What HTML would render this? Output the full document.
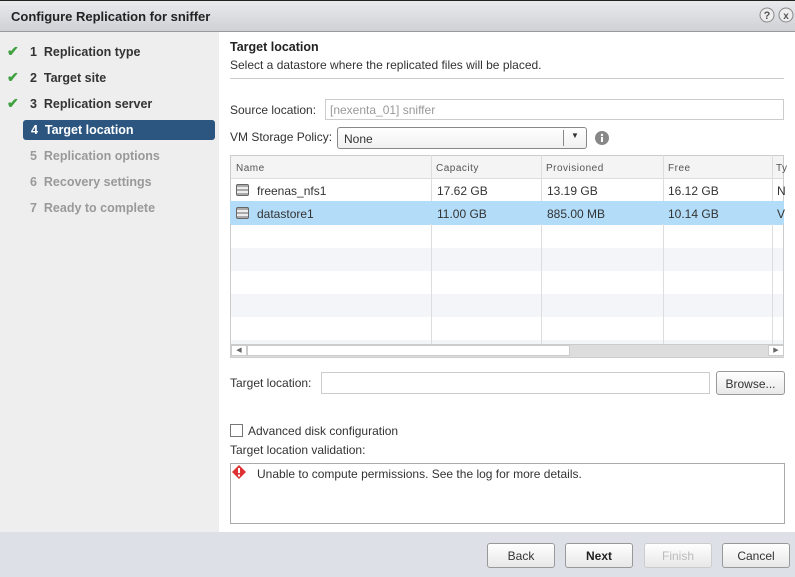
<!DOCTYPE html>
<html><head><style>
*{box-sizing:border-box;margin:0;padding:0}
body{width:795px;height:577px;overflow:hidden;font-family:"Liberation Sans",sans-serif;font-size:12px;color:#333;position:relative;background:#fff}
.a{position:absolute}
.title{left:0;top:0;width:795px;height:32px;background:linear-gradient(#e9eaec,#cfd1d5);border-top:1px solid #222;border-bottom:1px solid #999;font-weight:bold;font-size:13px;padding:8px 0 0 11px;color:#222}
.left{left:0;top:32px;width:219px;height:500px;background:#eeeeee}
.step{position:absolute;left:30px;font-weight:bold;font-size:12.5px;color:#333}
.step.dis{color:#999}
.chk{position:absolute;left:7px;color:#3ea03e;font-weight:bold;font-size:14px}
.sel{left:23px;top:120px;width:192px;height:20px;background:#2c5680;border-radius:3px;color:#fff;font-weight:bold;font-size:12.5px;padding:3px 0 0 8px}
.footer{left:0;top:532px;width:795px;height:45px;background:#dde1e7}
.btn{position:absolute;top:543px;height:25px;border:1px solid #999;border-radius:3px;background:linear-gradient(#fff,#e8e8e8);text-align:center;padding-top:5px;font-size:12px;color:#333}
.inp{position:absolute;border:1px solid #ccc;background:#fff}
.cell{position:absolute;font-size:12px;color:#333}
.hd{font-size:10px;color:#555;letter-spacing:.5px}
.vl{position:absolute;top:155px;width:1px;height:189px;background:#ddd}
.db{position:absolute;width:13px;height:12px;border:1px solid #666;border-radius:2px;background:repeating-linear-gradient(#aaa 0 2px,#eee 2px 4px)}
</style></head><body>
<div class="a title">Configure Replication for sniffer</div>
<svg class="a" style="left:759px;top:6px" width="36" height="20"><circle cx="8" cy="9" r="7" fill="#eee" stroke="#888"/><text x="8" y="13" font-size="11" font-weight="bold" text-anchor="middle" fill="#555" font-family="Liberation Sans">?</text><circle cx="27" cy="9" r="7" fill="#eee" stroke="#888"/><text x="27" y="13" font-size="10" font-weight="bold" text-anchor="middle" fill="#555" font-family="Liberation Sans">x</text></svg>
<div class="a left"></div>
<div class="chk" style="top:43px">✔</div><div class="step" style="top:45px">1&nbsp; Replication type</div>
<div class="chk" style="top:69px">✔</div><div class="step" style="top:71px">2&nbsp; Target site</div>
<div class="chk" style="top:95px">✔</div><div class="step" style="top:97px">3&nbsp; Replication server</div>
<div class="a sel">4&nbsp; Target location</div>
<div class="step dis" style="top:149px">5&nbsp; Replication options</div>
<div class="step dis" style="top:175px">6&nbsp; Recovery settings</div>
<div class="step dis" style="top:201px">7&nbsp; Ready to complete</div>

<div class="a" style="left:230px;top:40px;font-weight:bold;font-size:12.5px;color:#222">Target location</div>
<div class="a" style="left:230px;top:58px;color:#333">Select a datastore where the replicated files will be placed.</div>
<div class="a" style="left:230px;top:78px;width:554px;height:1px;background:#ccc"></div>
<div class="a" style="left:230px;top:103px">Source location:</div>
<div class="inp" style="left:325px;top:99px;width:459px;height:21px;padding:3px 4px;color:#999">[nexenta_01] sniffer</div>
<div class="a" style="left:230px;top:130px">VM Storage Policy:</div>
<div class="inp" style="left:337px;top:127px;width:250px;height:22px;border:1px solid #888;border-radius:3px;background:linear-gradient(#fff,#f0f0f0);padding:4px 6px;color:#333">None</div>
<div class="a" style="left:563px;top:130px;width:1px;height:16px;background:#888"></div>
<div class="a" style="left:571px;top:131px;font-size:8px">▼</div>
<svg class="a" style="left:595px;top:131px" width="14" height="14"><circle cx="7" cy="7" r="7" fill="#888"/><rect x="6" y="6" width="2" height="5" fill="#fff"/><circle cx="7" cy="4" r="1.2" fill="#fff"/></svg>

<div class="a" style="left:230px;top:155px;width:554px;height:203px;border:1px solid #ccc;background:#fff;overflow:hidden">
 <div class="a" style="left:0;top:0;width:554px;height:23px;background:#f4f4f4;border-bottom:1px solid #ddd"></div>
 <div class="a" style="left:0;top:46px;width:554px;height:23px;background:#b3dcf8"></div>
 <div class="a" style="left:0;top:92px;width:554px;height:23px;background:#f3f5f9"></div>
 <div class="a" style="left:0;top:138px;width:554px;height:23px;background:#f3f5f9"></div>
 <div class="a" style="left:0;top:184px;width:554px;height:4px;background:#f3f5f9"></div>
</div>
<div class="vl" style="left:431px"></div><div class="vl" style="left:541px"></div><div class="vl" style="left:663px"></div><div class="vl" style="left:772px"></div>
<div class="a" style="left:230px;top:201px;width:554px;height:23px;background:#b3dcf8"></div>
<div class="cell hd" style="left:236px;top:163px">Name</div>
<div class="cell hd" style="left:436px;top:163px">Capacity</div>
<div class="cell hd" style="left:546px;top:163px">Provisioned</div>
<div class="cell hd" style="left:668px;top:163px">Free</div>
<div class="cell hd" style="left:776px;top:163px">Ty</div>
<div class="db" style="left:236px;top:184px"></div>
<div class="cell" style="left:257px;top:184px">freenas_nfs1</div>
<div class="cell" style="left:437px;top:184px">17.62 GB</div>
<div class="cell" style="left:547px;top:184px">13.19 GB</div>
<div class="cell" style="left:668px;top:184px">16.12 GB</div>
<div class="cell" style="left:777px;top:184px">N</div>
<div class="db" style="left:236px;top:207px"></div>
<div class="cell" style="left:257px;top:207px">datastore1</div>
<div class="cell" style="left:437px;top:207px">11.00 GB</div>
<div class="cell" style="left:547px;top:207px">885.00 MB</div>
<div class="cell" style="left:668px;top:207px">10.14 GB</div>
<div class="cell" style="left:777px;top:207px">V</div>
<div class="a" style="left:231px;top:344px;width:553px;height:13px;background:#ddd;border-top:1px solid #ccc"></div>
<div class="a" style="left:247px;top:345px;width:323px;height:11px;background:#fff;border:1px solid #ccc"></div>
<div class="a" style="left:231px;top:345px;width:16px;height:11px;background:#fff;border:1px solid #ccc;font-size:7px;color:#666;text-align:center">◀</div>
<div class="a" style="left:768px;top:345px;width:16px;height:11px;background:#fff;border:1px solid #ccc;font-size:7px;color:#666;text-align:center">▶</div>

<div class="a" style="left:230px;top:376px">Target location:</div>
<div class="inp" style="left:321px;top:372px;width:389px;height:22px"></div>
<div class="btn" style="left:716px;top:371px;width:69px;height:24px">Browse...</div>

<div class="a" style="left:230px;top:424px;width:13px;height:13px;border:1px solid #777;background:#fff"></div>
<div class="a" style="left:248px;top:424px">Advanced disk configuration</div>
<div class="a" style="left:230px;top:443px">Target location validation:</div>
<div class="inp" style="left:230px;top:463px;width:555px;height:61px;border-color:#aaa"></div>
<svg class="a" style="left:232px;top:465px" width="14" height="14"><path d="M7 0L14 7L7 14L0 7Z" fill="#d33"/><rect x="6" y="3" width="2" height="5" fill="#fff"/><rect x="6" y="9.5" width="2" height="2" fill="#fff"/></svg>
<div class="a" style="left:257px;top:467px">Unable to compute permissions. See the log for more details.</div>

<div class="a footer"></div>
<div class="btn" style="left:487px;width:68px">Back</div>
<div class="btn" style="left:565px;width:68px;font-weight:bold;color:#222">Next</div>
<div class="btn" style="left:644px;width:68px;color:#bbb;border-color:#ccc">Finish</div>
<div class="btn" style="left:722px;width:68px">Cancel</div>
</body></html>
